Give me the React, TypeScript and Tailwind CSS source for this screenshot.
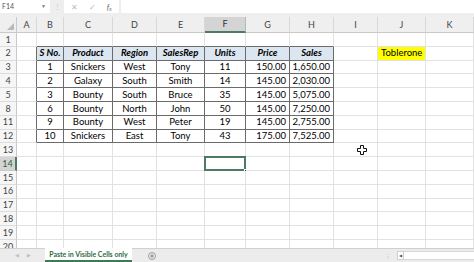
const cols = [
  { k: "A", w: "w-[20px]" },
  { k: "B", w: "w-[27px]" },
  { k: "C", w: "w-[49px]" },
  { k: "D", w: "w-[44px]" },
  { k: "E", w: "w-[48px]" },
  { k: "F", w: "w-[41px]" },
  { k: "G", w: "w-[44px]" },
  { k: "H", w: "w-[44px]" },
  { k: "I", w: "w-[44px]" },
  { k: "J", w: "w-[48px]" },
  { k: "K", w: "flex-1" },
];

const header = ["S No.", "Product", "Region", "SalesRep", "Units", "Price", "Sales"];

const data = [
  ["1", "Snickers", "West", "Tony", "11", "150.00", "1,650.00"],
  ["2", "Galaxy", "South", "Smith", "14", "145.00", "2,030.00"],
  ["3", "Bounty", "South", "Bruce", "35", "145.00", "5,075.00"],
  ["6", "Bounty", "North", "John", "50", "145.00", "7,250.00"],
  ["9", "Bounty", "West", "Peter", "19", "145.00", "2,755.00"],
  ["10", "Snickers", "East", "Tony", "43", "175.00", "7,525.00"],
];

const rowLabels = ["1", "2", "3", "4", "5", "8", "11", "12", "13", "14", "15", "16", "17", "18", "19", "20"];

function Cell({
  col,
  ri,
}: {
  col: number;
  ri: number;
}) {
  const inTable = ri >= 1 && ri <= 7 && col >= 1 && col <= 7;
  const leftOfTable = ri >= 1 && ri <= 7 && col === 0;
  const aboveTable = ri === 0 && col >= 1 && col <= 7;
  const lastTableRow = ri === 7;
  const right = inTable || leftOfTable ? "border-r-[#6b6b6b]" : "border-r-[#e2e2e2]";
  const bottom =
    aboveTable || (inTable && lastTableRow) || inTable ? "border-b-[#6b6b6b]" : "border-b-[#e2e2e2]";

  let content: React.ReactNode = null;
  let align = "justify-center";
  let bg = "bg-white";
  let text = "";

  if (inTable) {
    if (ri === 1) {
      content = header[col - 1];
      bg = "bg-[#dce6f1]";
      text = "font-bold italic";
    } else {
      content = data[ri - 2][col - 1];
    }
    if (ri > 1 && col >= 6) align = "justify-end pr-[3px]";
  }
  if (ri === 1 && col === 9) {
    content = "Toblerone";
    bg = "bg-[#ffff00]";
    align = "justify-start pl-[3px]";
  }
  const selected = ri === 9 && col === 5;

  return (
    <div
      className={`relative flex h-full shrink-0 items-center border-r border-b ${cols[col].w} ${right} ${bottom} ${bg} ${align} ${text}`}
    >
      <span className="leading-none">{content}</span>
      {selected && (
        <>
          <div className="absolute -left-px -top-px bottom-[-1px] right-[-1px] border-2 border-[#4d7a62]" />
          <div className="absolute bottom-[-3px] right-[-3px] h-[4px] w-[4px] border border-white bg-[#2c5e43]" />
        </>
      )}
    </div>
  );
}

export default function App() {
  return (
    <div
      className="relative flex h-[262px] w-[474px] flex-col overflow-hidden bg-white text-black"
      style={{ fontFamily: "Lato, 'Liberation Sans', sans-serif" }}
    >
      {/* formula bar */}
      <div className="flex h-[17px] shrink-0 items-start gap-[2px] bg-[#eeeeee] pb-[4px]">
        <div className="flex h-[13px] w-[50px] items-center justify-between bg-white pl-[2px] pr-[4px] text-[7px] text-[#555]">
          <span>F14</span>
          <span className="text-[5px] text-[#777]">▼</span>
        </div>
        <div className="flex h-[13px] w-[10px] items-center justify-center text-[7px] text-[#bbb]">⋮</div>
        <div className="flex h-[13px] w-[55px] items-center justify-around bg-white px-[2px] text-[8px] text-[#bbb]">
          <span>✕</span>
          <span>✓</span>
          <span className="italic text-[#666]">f<sub className="text-[5px]">x</sub></span>
        </div>
        <div className="h-[13px] flex-1 bg-white" />
      </div>

      {/* column headers */}
      <div className="flex h-[16px] shrink-0 text-[9px] text-[#444]">
        <div className="relative flex w-[17px] shrink-0 items-end justify-end border-r border-b border-[#c9c9c9] bg-[#efefef] p-[2px]">
          <svg width="7" height="7" viewBox="0 0 7 7">
            <path d="M7 0 L7 7 L0 7 Z" fill="#b9b9b9" />
          </svg>
        </div>
        {cols.map((c) => (
          <div
            key={c.k}
            className={`flex shrink-0 items-center justify-center border-r ${c.w} ${
              c.k === "F"
                ? "border-b-2 border-b-[#4d7a62] border-r-[#b8b8b8] bg-[#d4d4d4] text-[#333]"
                : "border-b border-b-[#c9c9c9] border-r-[#d8d8d8] bg-[#efefef]"
            }`}
          >
            {c.k}
          </div>
        ))}
      </div>

      {/* grid rows */}
      <div className="flex flex-1 flex-col overflow-hidden text-[9.5px]">
        {rowLabels.map((label, ri) => (
          <div key={label} className="flex h-[13.8px] shrink-0">
            <div
              className={`flex w-[17px] shrink-0 items-center justify-center border-b text-[9px] ${
                ri === 9
                  ? "border-r-2 border-r-[#4d7a62] border-b-[#c9c9c9] bg-[#d4d4d4] text-[#2f5f45]"
                  : "border-r border-r-[#c9c9c9] border-b-[#dcdcdc] bg-[#f6f6f6] text-[#444]"
              }`}
            >
              {label}
            </div>
            {cols.map((c, ci) => (
              <Cell key={c.k} col={ci} ri={ri} />
            ))}
          </div>
        ))}
      </div>

      {/* sheet tabs */}
      <div className="flex h-[14px] shrink-0 items-stretch border-t border-[#d0d0d0] bg-[#ececec] text-[7px]">
        <div className="flex w-[45px] items-center justify-center gap-[8px] text-[5px] text-[#c0c0c0]">
          <span>◀</span>
          <span>▶</span>
        </div>
        <div className="-mt-px flex w-[87px] items-center justify-center border-b-2 border-[#3f7a55] bg-white font-bold text-[#2f6b46]">
          Paste in Visible Cells only
        </div>
        <div className="flex w-[40px] items-center justify-center">
          <svg width="8" height="8" viewBox="0 0 8 8">
            <circle cx="4" cy="4" r="3.5" fill="none" stroke="#888" strokeWidth="0.8" />
            <path d="M4 2 V6 M2 4 H6" stroke="#777" strokeWidth="0.8" />
          </svg>
        </div>
        <div className="flex-1" />
        <div className="flex items-center pr-[6px] text-[6px] text-[#c0c0c0]">⋮</div>
        <div className="my-[2px] flex w-[7px] items-center justify-center border border-[#cfcfcf] bg-white text-[4px] text-[#555]">
          ◀
        </div>
        <div className="my-[2px] w-[70px] border-y border-[#d8d8d8] bg-white" />
      </div>

      {/* mouse cursor */}
      <svg
        className="absolute left-[357px] top-[145px]"
        width="10"
        height="10"
        viewBox="0 0 10 10"
      >
        <path
          d="M3.5 0.5 H6.5 V3.5 H9.5 V6.5 H6.5 V9.5 H3.5 V6.5 H0.5 V3.5 H3.5 Z"
          fill="#fff"
          stroke="#111"
          strokeWidth="1"
        />
      </svg>
    </div>
  );
}
